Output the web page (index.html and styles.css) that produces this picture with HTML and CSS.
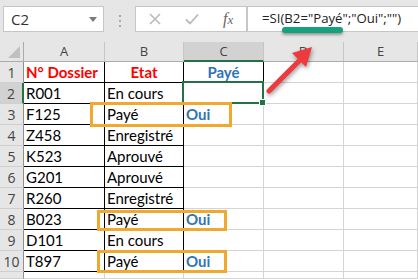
FILE: index.html
```html
<!DOCTYPE html>
<html lang="fr">
<head>
  <meta charset="UTF-8">
  <title>Formule SI</title>
  <link rel="stylesheet" href="styles.css">
</head>
<body>

<div class="screen">
  <div class="toolbar">
    <div class="namebox"><span>C2</span><span class="caret"></span></div>
    <div class="grip"><i></i><i></i><i></i></div>
    <div class="fxbox">
      <svg class="ico" width="12" height="12" viewBox="0 0 12 12"><path d="M1 1L11 11M11 1L1 11" stroke="#b9b9b9" stroke-width="1.6" fill="none"/></svg>
      <svg class="ico" width="14" height="12" viewBox="0 0 14 12"><path d="M1 6.5L5 10.5L13 1.5" stroke="#b9b9b9" stroke-width="1.8" fill="none"/></svg>
      <span class="fx">f<small>x</small></span>
    </div>
    <div class="formula">=SI(B2="Payé";"Oui";"")</div>
  </div>

  <div class="sheet">
    <div class="hd corner"></div>
    <div class="hd">A</div>
    <div class="hd">B</div>
    <div class="hd sel">C</div>
    <div class="hd">D</div>
    <div class="hd">E</div>

    <div class="rh">1</div>
    <div class="c t red">N° Dossier</div>
    <div class="c t red center">Etat</div>
    <div class="c t blue center">Payé</div>
    <div class="c"></div><div class="c"></div>

    <div class="rh sel">2</div>
    <div class="c t">R001</div>
    <div class="c t">En cours</div>
    <div class="c active"></div>
    <div class="c"></div><div class="c"></div>

    <div class="rh">3</div>
    <div class="c t">F125</div>
    <div class="c t">Payé</div>
    <div class="c blue">Oui</div>
    <div class="c"></div><div class="c"></div>

    <div class="rh">4</div>
    <div class="c t">Z458</div>
    <div class="c t">Enregistré</div>
    <div class="c"></div>
    <div class="c"></div><div class="c"></div>

    <div class="rh">5</div>
    <div class="c t">K523</div>
    <div class="c t">Aprouvé</div>
    <div class="c"></div>
    <div class="c"></div><div class="c"></div>

    <div class="rh">6</div>
    <div class="c t">G201</div>
    <div class="c t">Aprouvé</div>
    <div class="c"></div>
    <div class="c"></div><div class="c"></div>

    <div class="rh">7</div>
    <div class="c t">R260</div>
    <div class="c t">Enregistré</div>
    <div class="c"></div>
    <div class="c"></div><div class="c"></div>

    <div class="rh">8</div>
    <div class="c t">B023</div>
    <div class="c t">Payé</div>
    <div class="c blue">Oui</div>
    <div class="c"></div><div class="c"></div>

    <div class="rh">9</div>
    <div class="c t">D101</div>
    <div class="c t">En cours</div>
    <div class="c"></div>
    <div class="c"></div><div class="c"></div>

    <div class="rh">10</div>
    <div class="c t">T897</div>
    <div class="c t">Payé</div>
    <div class="c blue">Oui</div>
    <div class="c"></div><div class="c"></div>

    <div class="rh"></div>
    <div class="c"></div><div class="c"></div><div class="c"></div>
    <div class="c"></div><div class="c"></div>
  </div>

  <!-- annotations -->
  <div class="mark mark1"></div>
  <div class="mark mark2"></div>
  <div class="mark mark3"></div>
  <div class="underline"></div>
  <svg class="arrow" width="70" height="70" viewBox="0 0 70 70">
    <path d="M14 53L47 20" stroke="#ee3a3c" stroke-width="5" stroke-linecap="round"/>
    <path d="M57 9L51 29L37 15Z" fill="#ee3a3c"/>
  </svg>
</div>

</body>
</html>
```

FILE: styles.css
```css
body {
  margin: 0;
  width: 418px;
  height: 279px;
  overflow: hidden;
  background: #fff;
  font-family: Lato, "Liberation Sans", sans-serif;
}

.screen {
  position: relative;
  height: 279px;
  overflow: hidden;
}

/* formula bar */
.toolbar {
  display: flex;
  align-items: flex-start;
  height: 42px;
  padding-top: 6px;
  box-sizing: border-box;
  background: #e6e6e6;
}

.namebox {
  margin-left: 3px;
  width: 101px;
  height: 26px;
  box-sizing: border-box;
  background: #fff;
  border: 1px solid #c6c6c6;
  display: flex;
  align-items: center;
  justify-content: space-between;
  padding: 0 6px 0 7px;
  font: 15px "Open Sans", sans-serif;
  color: #333;
}

.caret {
  border-left: 4px solid transparent;
  border-right: 4px solid transparent;
  border-top: 5px solid #7a7a7a;
}

.grip {
  width: 31px;
  display: flex;
  flex-direction: column;
  align-items: center;
  gap: 3px;
  padding-top: 9px;
}

.grip i {
  width: 2px;
  height: 2px;
  background: #a8a8a8;
}

.fxbox {
  width: 112px;
  height: 26px;
  box-sizing: border-box;
  background: #fff;
  border: 1px solid #c6c6c6;
  display: flex;
  align-items: center;
  padding-left: 13px;
  gap: 24px;
}

.fx {
  font: italic 16px "Liberation Serif", serif;
  color: #666;
}

.fx small {
  font-size: 13px;
}

.formula {
  flex: 1;
  height: 26px;
  box-sizing: border-box;
  background: #fff;
  border: 1px solid #c6c6c6;
  border-right: 0;
  padding-left: 14px;
  font: 13.2px "Open Sans", sans-serif;
  line-height: 23px;
  color: #222;
  white-space: nowrap;
}

/* grid */
.sheet {
  display: grid;
  grid-template-columns: 24px 81px 79px 80px 80px 74px;
  grid-template-rows: 20px repeat(10, 21px) 7px;
}

.hd {
  box-sizing: border-box;
  background: #e6e6e6;
  border-right: 1px solid #c6c6c6;
  border-bottom: 1px solid #ababab;
  text-align: center;
  font: 13px "Open Sans", sans-serif;
  line-height: 19px;
  color: #444;
}

.hd.sel {
  background: #d2d2d2;
  border-bottom: 2px solid #217346;
}

.corner {
  position: relative;
  border-right-color: #ababab;
}

.corner::after {
  content: '';
  position: absolute;
  right: 3px;
  bottom: 3px;
  border-left: 12px solid transparent;
  border-bottom: 12px solid #c0c0c0;
}

.rh {
  box-sizing: border-box;
  background: #e6e6e6;
  border-right: 1px solid #8f8f8f;
  border-bottom: 1px solid #cfcfcf;
  text-align: center;
  font: 14px "Open Sans", sans-serif;
  line-height: 21px;
  color: #444;
}

.rh.sel {
  background: #d2d2d2;
  border-right: 2px solid #217346;
}

.c {
  box-sizing: border-box;
  border-right: 1px solid #d4d4d4;
  border-bottom: 1px solid #d4d4d4;
  padding: 0 2px;
  font-size: 15px;
  line-height: 21px;
  color: #000;
  white-space: nowrap;
  overflow: hidden;
}

.t {
  border-right-color: #000;
  border-bottom-color: #000;
}

.red {
  color: #f00;
  font-weight: bold;
}

.blue {
  color: #2e75b6;
  font-weight: bold;
}

.center {
  text-align: center;
}

.active {
  position: relative;
  overflow: visible;
}

.active::after {
  content: '';
  position: absolute;
  left: -2px;
  top: -2px;
  right: -1px;
  bottom: -1px;
  border: 2px solid #217346;
}

.active::before {
  content: '';
  position: absolute;
  right: -3px;
  bottom: -3px;
  width: 5px;
  height: 5px;
  background: #217346;
  border: 1px solid #fff;
  z-index: 1;
}

/* annotations */
.mark {
  position: absolute;
  box-sizing: border-box;
  border: 3px solid #f0a92c;
}

.mark1 {
  left: 90px;
  top: 102px;
  width: 142px;
  height: 25px;
}

.mark2 {
  left: 97px;
  top: 210px;
  width: 130px;
  height: 21px;
}

.mark3 {
  left: 97px;
  top: 250px;
  width: 130px;
  height: 23px;
}

.underline {
  position: absolute;
  left: 282px;
  top: 27px;
  width: 61px;
  height: 6px;
  border-radius: 3px;
  background: #17a07e;
  box-shadow: 0 2px 3px rgba(0, 0, 0, 0.35);
}

.arrow {
  position: absolute;
  left: 255px;
  top: 38px;
  filter: drop-shadow(1px 2px 2px rgba(0, 0, 0, 0.4));
}
```
